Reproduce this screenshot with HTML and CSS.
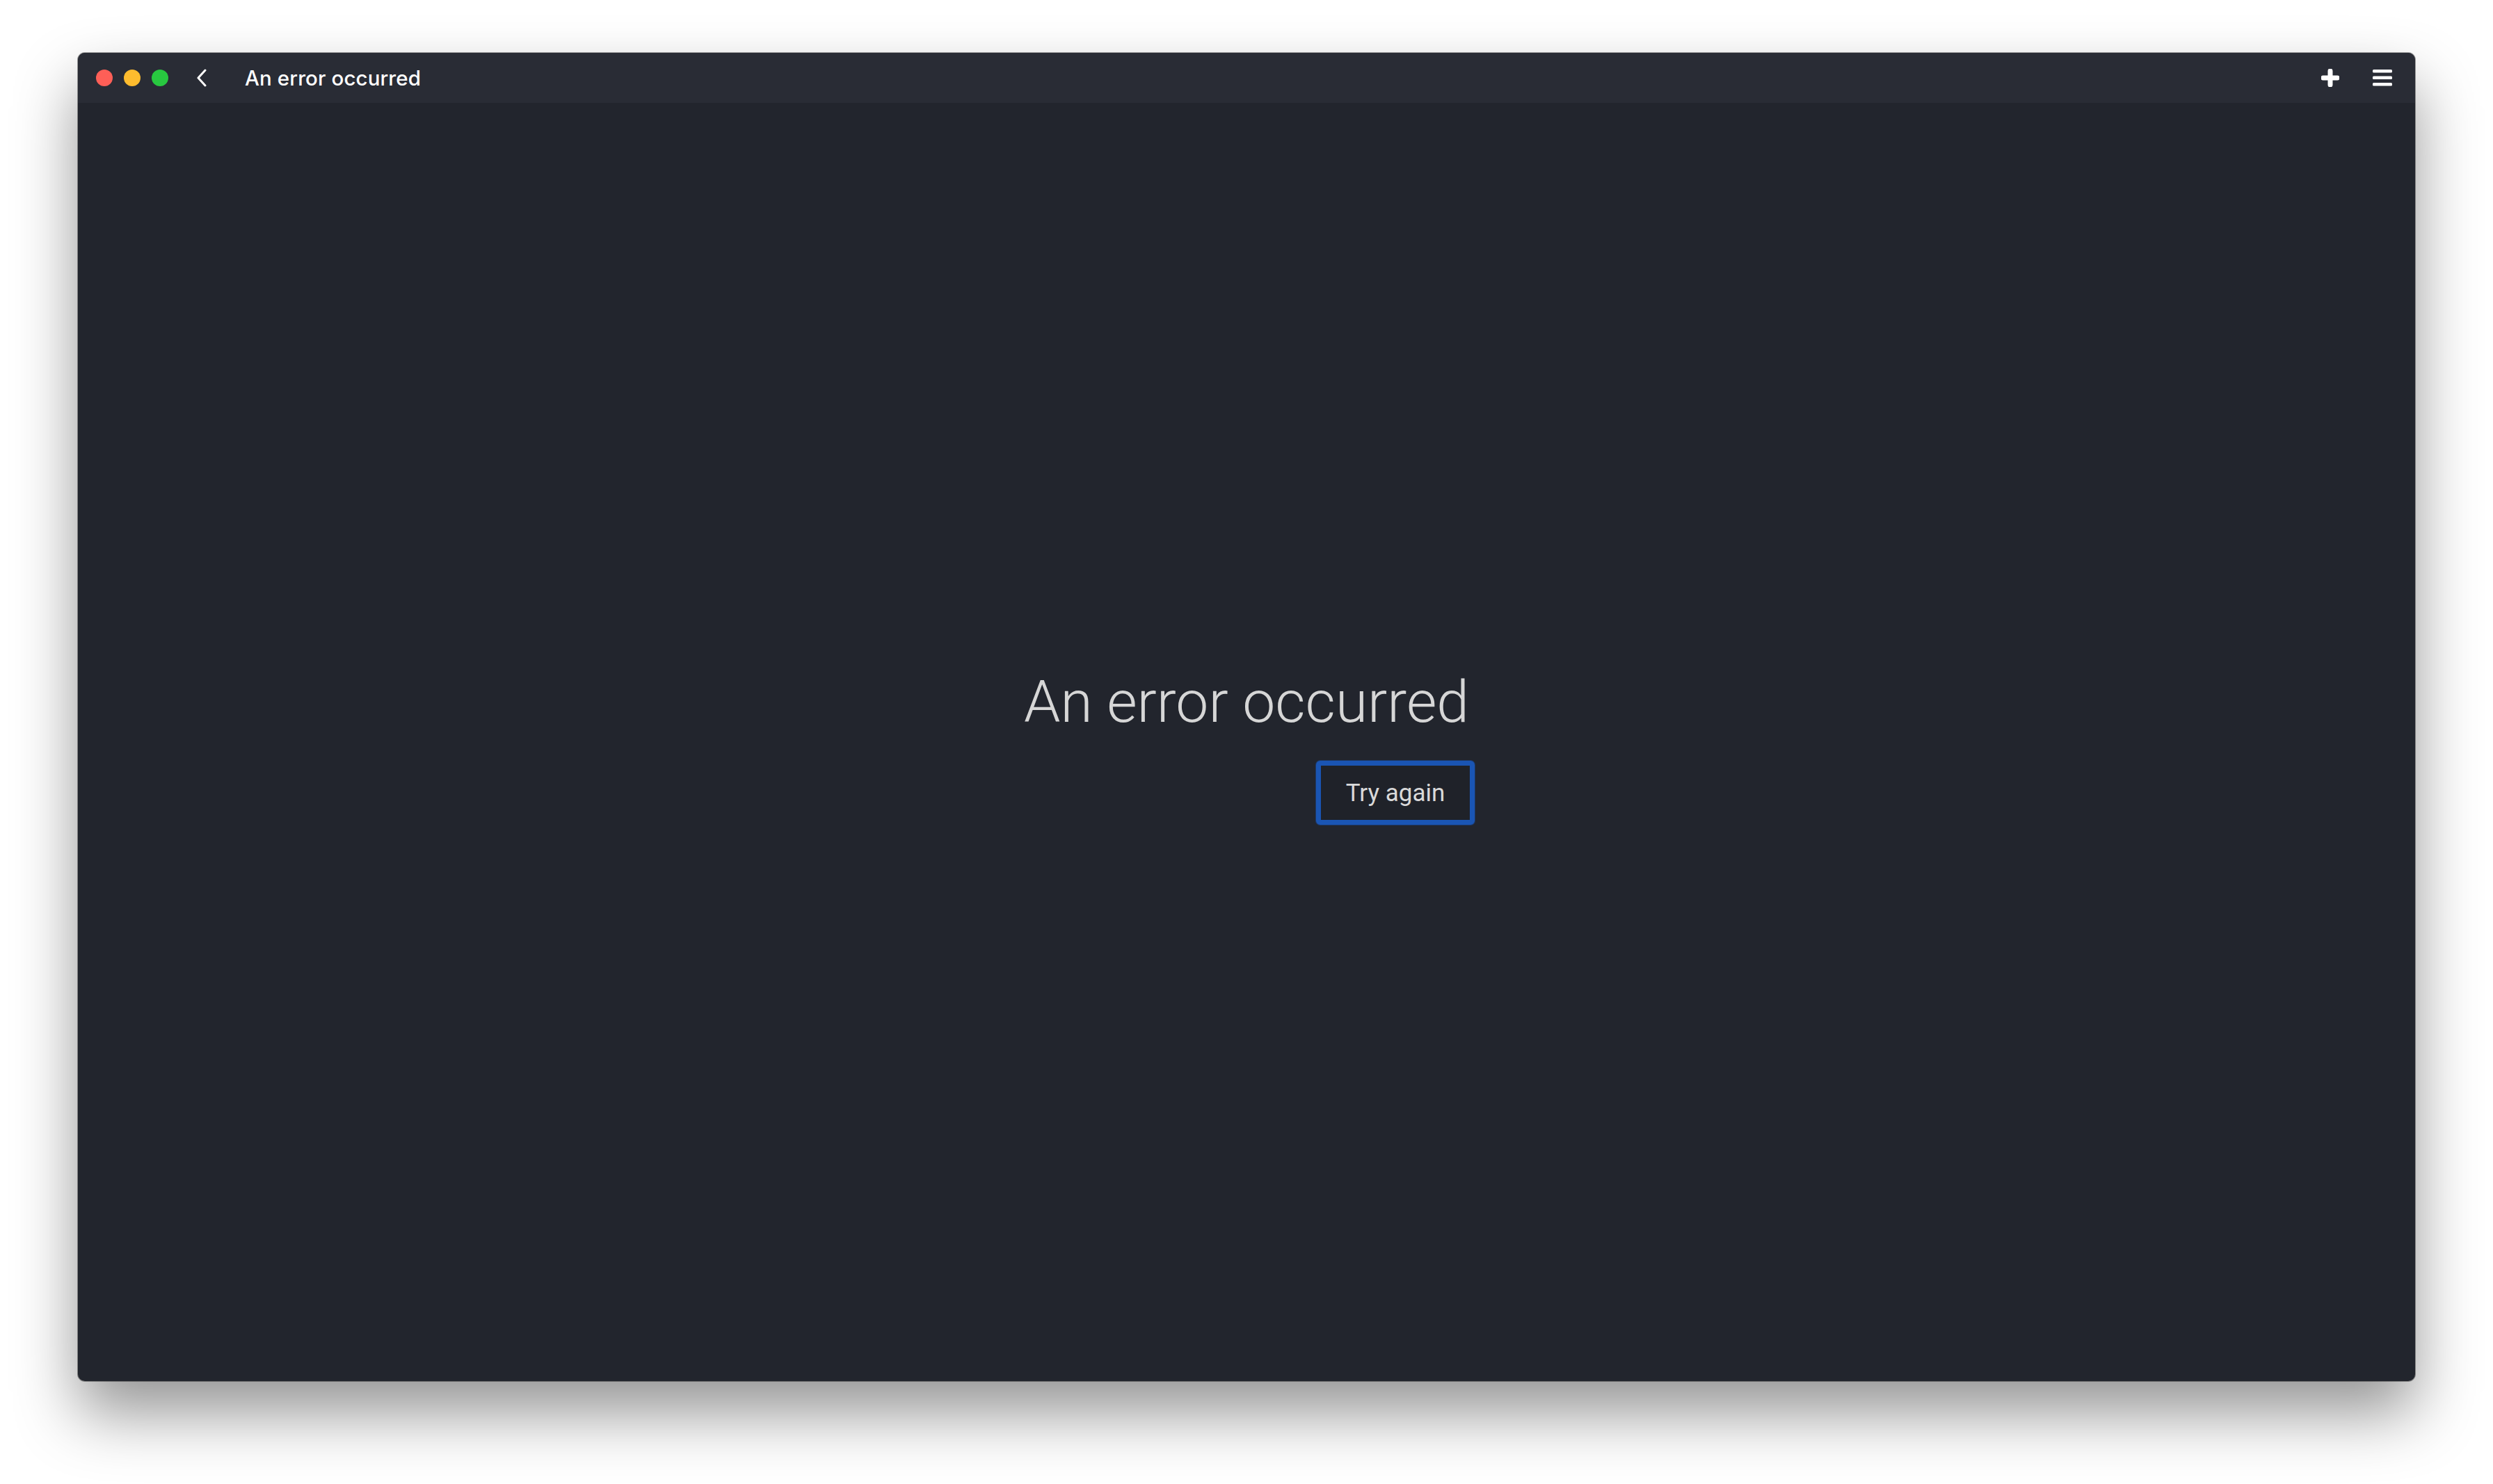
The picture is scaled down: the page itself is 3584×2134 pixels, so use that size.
FILE: index.html
```html
<!DOCTYPE html>
<html lang="en">
<head>
    <meta charset="UTF-8">
    <title>An error occurred</title>
    <link rel="stylesheet" href="styles.css">
</head>
<body>
<div class="window">
    <header class="titlebar">
        <div class="lights">
            <span class="light red"></span>
            <span class="light yellow"></span>
            <span class="light green"></span>
        </div>
        <div class="back-icon">
            <svg width="18" height="26" viewBox="0 0 18 26">
                <path d="M14 2 L4 13 L14 24" fill="none" stroke="#fff" stroke-width="3" stroke-linecap="round" stroke-linejoin="round"/>
            </svg>
        </div>
        <div class="title">An error occurred</div>
        <div class="actions">
            <svg class="plus-icon" width="26" height="26" viewBox="0 0 26 26">
                <path d="M13 3 V23 M3 13 H23" stroke="#fff" stroke-width="7" stroke-linecap="round"/>
            </svg>
            <svg class="menu-icon" width="28" height="24" viewBox="0 0 28 24">
                <rect x="0" y="0" width="28" height="4.5" rx="1.5" fill="#fff"/>
                <rect x="0" y="9.5" width="28" height="4.5" rx="1.5" fill="#fff"/>
                <rect x="0" y="19" width="28" height="4.5" rx="1.5" fill="#fff"/>
            </svg>
        </div>
    </header>

    <main class="content">
        <div class="error-box">
            <h1 class="error-title">An error occurred</h1>
            <button class="retry-button">Try again</button>
        </div>
    </main>
</div>
</body>
</html>
```

FILE: styles.css
```css
html, body {
    margin: 0;
    padding: 0;
    background-color: #ffffff;
}

body {
    box-sizing: border-box;
    height: 100vh;
    padding: 76px 112px 148px;
    display: flex;
    font-family: Inter, "Noto Sans", sans-serif;
}

.window {
    flex: 1;
    display: flex;
    flex-direction: column;
    background-color: #22252d;
    border-radius: 10px;
    overflow: hidden;
    box-shadow: 0 0 0 1px rgba(0, 0, 0, 0.35), 0 46px 90px rgba(0, 0, 0, 0.42);
}

.titlebar {
    height: 72px;
    display: flex;
    align-items: center;
    background-color: #292c35;
    padding: 0 33px 0 26px;
}

.lights {
    display: flex;
    gap: 16px;
}

.light {
    width: 24px;
    height: 24px;
    border-radius: 50%;
}

.light.red { background-color: #fe5f57; }
.light.yellow { background-color: #febc2e; }
.light.green { background-color: #28c840; }

.back-icon {
    display: flex;
    margin-left: 39px;
}

.title {
    margin-left: 53px;
    color: #ffffff;
    font-size: 29.5px;
    font-weight: 450;
    letter-spacing: 0.1px;
}

.actions {
    margin-left: auto;
    display: flex;
    align-items: center;
    gap: 48px;
}

.content {
    flex: 1;
    display: flex;
    justify-content: center;
    align-items: center;
    padding-top: 16px;
}

.error-box {
    display: flex;
    flex-direction: column;
    align-items: flex-end;
}

.error-title {
    margin: 0 0 38px;
    color: #d6d6d6;
    font-family: Roboto, "Noto Sans", sans-serif;
    font-weight: 300;
    font-size: 84px;
    line-height: 1.1;
}

.retry-button {
    width: 228px;
    height: 92px;
    margin-right: -8px;
    border: 7px solid #1a55b3;
    border-radius: 6px;
    background-color: #1f2229;
    color: #d9d9d9;
    font-family: Roboto, "Noto Sans", sans-serif;
    font-size: 35px;
    box-shadow: 0 0 0 1px rgba(26, 70, 140, 0.6);
}
```
